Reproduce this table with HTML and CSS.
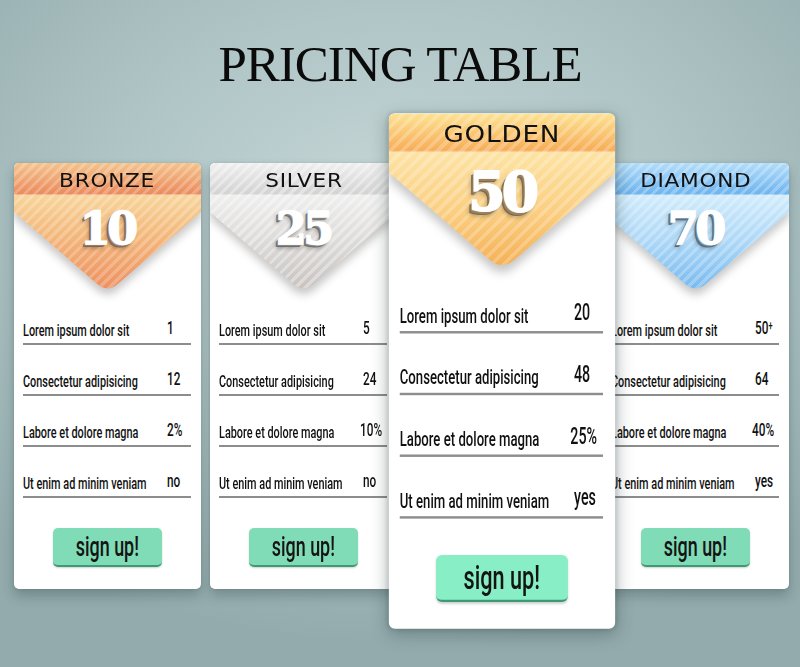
FILE: index.html
```html
<!DOCTYPE html>
<html lang="en">
<head>
<meta charset="utf-8">
<title>Pricing Table</title>
<link rel="stylesheet" href="styles.css">
</head>
<body>
<main class="page">
  <h1 class="title">PRICING TABLE</h1>
  <section class="plans">
    <article class="plan bronze">
      <div class="plan-head">
        <div class="head-shape">
          <div class="head-band"><span class="plan-name">BRONZE</span></div>
          <div class="plan-price">10</div>
        </div>
      </div>
      <ul class="features">
        <li><span class="label">Lorem ipsum dolor sit</span><span class="val">1</span></li>
        <li><span class="label">Consectetur adipisicing</span><span class="val">12</span></li>
        <li><span class="label">Labore et dolore magna</span><span class="val">2%</span></li>
        <li><span class="label">Ut enim ad minim veniam</span><span class="val">no</span></li>
      </ul>
      <div class="action"><button class="signup" type="button"><span class="signup-text">sign up!</span></button></div>
    </article>
    <article class="plan silver">
      <div class="plan-head">
        <div class="head-shape">
          <div class="head-band"><span class="plan-name">SILVER</span></div>
          <div class="plan-price">25</div>
        </div>
      </div>
      <ul class="features">
        <li><span class="label">Lorem ipsum dolor sit</span><span class="val">5</span></li>
        <li><span class="label">Consectetur adipisicing</span><span class="val">24</span></li>
        <li><span class="label">Labore et dolore magna</span><span class="val wide">10%</span></li>
        <li><span class="label">Ut enim ad minim veniam</span><span class="val">no</span></li>
      </ul>
      <div class="action"><button class="signup" type="button"><span class="signup-text">sign up!</span></button></div>
    </article>
    <article class="plan golden">
      <div class="plan-head">
        <div class="head-shape">
          <div class="head-band"><span class="plan-name">GOLDEN</span></div>
          <div class="plan-price">50</div>
        </div>
      </div>
      <ul class="features">
        <li><span class="label">Lorem ipsum dolor sit</span><span class="val">20</span></li>
        <li><span class="label">Consectetur adipisicing</span><span class="val">48</span></li>
        <li><span class="label">Labore et dolore magna</span><span class="val wide">25%</span></li>
        <li><span class="label">Ut enim ad minim veniam</span><span class="val">yes</span></li>
      </ul>
      <div class="action"><button class="signup" type="button"><span class="signup-text">sign up!</span></button></div>
    </article>
    <article class="plan diamond">
      <div class="plan-head">
        <div class="head-shape">
          <div class="head-band"><span class="plan-name">DIAMOND</span></div>
          <div class="plan-price">70</div>
        </div>
      </div>
      <ul class="features">
        <li><span class="label">Lorem ipsum dolor sit</span><span class="val">50<small>+</small></span></li>
        <li><span class="label">Consectetur adipisicing</span><span class="val">64</span></li>
        <li><span class="label">Labore et dolore magna</span><span class="val wide">40%</span></li>
        <li><span class="label">Ut enim ad minim veniam</span><span class="val">yes</span></li>
      </ul>
      <div class="action"><button class="signup" type="button"><span class="signup-text">sign up!</span></button></div>
    </article>
  </section>
</main>
</body>
</html>
```

FILE: styles.css
```css
html, body {
  margin: 0;
  padding: 0;
}

body {
  width: 800px;
  height: 667px;
  overflow: hidden;
  background: radial-gradient(ellipse 75% 65% at 50% 32%, #c7d7d7 0%, #b1c6c7 45%, #93abad 100%);
}

.page {
  padding-top: 39px;
}

.title {
  margin: 0;
  text-align: center;
  font-family: "Liberation Serif", serif;
  font-weight: normal;
  font-size: 51px;
  line-height: 51px;
  letter-spacing: -1px;
  color: #0b0b0b;
}

.plans {
  display: flex;
  align-items: flex-start;
  gap: 9px;
  padding-left: 14px;
  margin-top: 73px;
}

.plan {
  position: relative;
  width: 187px;
  flex: none;
  background: #fff;
  border-radius: 5px;
  overflow: hidden;
  padding-bottom: 22px;
  box-shadow: 0 7px 12px rgba(40, 60, 60, 0.3), 0 0 3px rgba(40, 60, 60, 0.15);
}

.plan.golden {
  z-index: 2;
  transform: translate(2.5px, -5px) scale(1.21);
  box-shadow: 0 4px 14px rgba(30, 50, 50, 0.35), 0 0 4px rgba(30, 50, 50, 0.2);
}

.plan-head {
  height: 130px;
  filter: drop-shadow(0 6px 4px rgba(0, 0, 0, 0.22));
}

.head-shape {
  height: 130px;
  clip-path: path('M0 0 H187 V49 L104.1 120.8 Q93.5 130 82.9 120.8 L0 49 Z');
  text-align: center;
}

.bronze .head-shape {
  background:
    repeating-linear-gradient(135deg, rgba(255,255,255,0.22) 0 3px, rgba(255,255,255,0) 3px 7px),
    linear-gradient(180deg, #f4c38c 0, #eb8a5b 32px, #f8d59c 32px, #f4ba7d 70px, #ed8d5e 130px);
}

.silver .head-shape {
  background:
    repeating-linear-gradient(135deg, rgba(255,255,255,0.35) 0 3px, rgba(255,255,255,0) 3px 7px),
    linear-gradient(180deg, #efefef 0, #d2d2d2 32px, #efefef 32px, #dcdad8 80px, #c6c1bd 130px);
}

.golden .head-shape {
  background:
    repeating-linear-gradient(135deg, rgba(255,255,255,0.22) 0 3px, rgba(255,255,255,0) 3px 7px),
    linear-gradient(180deg, #fde293 0, #f7ab55 32px, #fde3a4 32px, #fbcf82 80px, #f4ae52 130px);
}

.diamond .head-shape {
  background:
    repeating-linear-gradient(135deg, rgba(255,255,255,0.25) 0 3px, rgba(255,255,255,0) 3px 7px),
    linear-gradient(180deg, #b3ddfa 0, #6bb3ee 32px, #d2ecfc 32px, #abd7f7 80px, #74b7ee 130px);
}

.head-band {
  height: 32px;
  display: flex;
  align-items: center;
  justify-content: center;
  box-shadow: inset 0 -1px 0 rgba(255, 255, 255, 0.35);
}

.plan-name {
  display: inline-block;
  font-family: "DejaVu Sans", sans-serif;
  font-size: 19px;
  letter-spacing: 0.6px;
  color: #111;
  padding-top: 2px;
  transform: scaleX(1.14);
}

.plan-price {
  margin-top: 12px;
  font-family: "DejaVu Serif", serif;
  font-weight: bold;
  font-size: 44px;
  line-height: 44px;
  letter-spacing: -3px;
  color: #fff;
  -webkit-text-stroke: 1.5px #fff;
  text-shadow: -1px 1px 0 #d8c4b2, -2px 2px 0 #9a7e6a, -3px 3px 0 #7d6553, -3px 4px 4px rgba(0, 0, 0, 0.35);
}

.silver .plan-price {
  text-shadow: -1px 1px 0 #cfcfcf, -2px 2px 0 #888, -3px 3px 0 #6e6e6e, -3px 4px 4px rgba(0, 0, 0, 0.35);
}

.golden .plan-price {
  text-shadow: -1px 1px 0 #e3cfa8, -2px 2px 0 #998262, -3px 3px 0 #7f6a4c, -3px 4px 4px rgba(0, 0, 0, 0.35);
}

.diamond .plan-price {
  text-shadow: -1px 1px 0 #c2d4e0, -2px 2px 0 #6b8599, -3px 3px 0 #55697a, -3px 4px 4px rgba(0, 0, 0, 0.35);
}

.features {
  list-style: none;
  margin: 1px 10px 0 9px;
  padding: 0;
}

.features li {
  height: 51px;
  box-sizing: border-box;
  display: flex;
  align-items: flex-end;
  border-bottom: 2px solid #8d8d8d;
  padding-bottom: 4px;
  font-family: Roboto, "Liberation Sans", sans-serif;
  font-weight: 500;
  color: #111;
}

.label {
  flex: 1;
  min-width: 0;
  white-space: nowrap;
  font-size: 17px;
  line-height: 17px;
  transform: scaleX(0.64);
  transform-origin: left bottom;
}

.val {
  flex: none;
  width: 24px;
  white-space: nowrap;
  font-size: 19px;
  line-height: 19px;
  padding-bottom: 2px;
  transform: scaleX(0.62);
  transform-origin: left bottom;
}

.val.wide {
  margin-left: -3px;
  width: 27px;
}

.val small {
  font-size: 12px;
  vertical-align: 4px;
}

.action {
  display: flex;
  justify-content: center;
  margin-top: 30px;
}

.signup {
  width: 109px;
  height: 39px;
  border: 0;
  border-bottom: 2px solid #3e9a76;
  border-radius: 5px;
  background: #80dcb6;
  color: #141414;
  padding: 0;
  box-shadow: 0 1px 2px rgba(0, 0, 0, 0.18);
  display: flex;
  align-items: center;
  justify-content: center;
}

.signup-text {
  display: inline-block;
  font-family: Roboto, "Liberation Sans", sans-serif;
  font-weight: 500;
  font-size: 28px;
  line-height: 28px;
  transform: scaleX(0.64);
  white-space: nowrap;
}

.golden .signup {
  background: #88eec6;
}
```
